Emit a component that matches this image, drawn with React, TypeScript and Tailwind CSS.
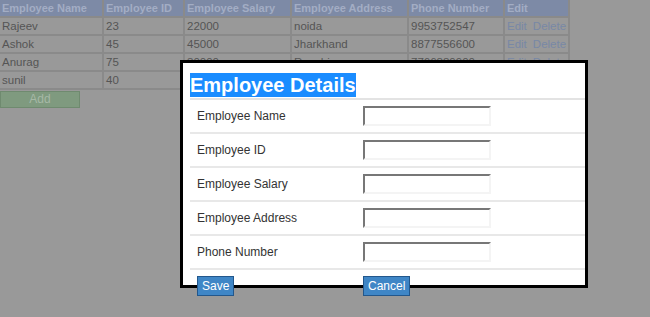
const employees = [
  { name: 'Rajeev', id: '23', salary: '22000', address: 'noida', phone: '9953752547' },
  { name: 'Ashok', id: '45', salary: '45000', address: 'Jharkhand', phone: '8877556600' },
  { name: 'Anurag', id: '75', salary: '30000', address: 'Ranchi', phone: '7766889900' },
  { name: 'sunil', id: '40', salary: '40000', address: 'Delhi', phone: '9988776655' },
]

const fields = ['Employee Name', 'Employee ID', 'Employee Salary', 'Employee Address', 'Phone Number']

const cell = 'h-[16px] p-0 pl-[2px] border-r-2 border-b-2 border-[#8a8a8a] leading-[16px] text-left whitespace-nowrap overflow-hidden'

export default function App() {
  return (
    <div className="relative min-h-screen bg-[#999999] font-['Liberation_Sans',Arial,sans-serif]">
      <table className="table-fixed w-[569px] border-collapse text-[11.5px] text-[#555555]">
        <thead>
          <tr className="bg-[#7d8aa6] text-[#a3adc4] font-bold text-[11px]">
            <th className={`${cell} w-[103px]`}>Employee Name</th>
            <th className={`${cell} w-[81px]`}>Employee ID</th>
            <th className={`${cell} w-[107px]`}>Employee Salary</th>
            <th className={`${cell} w-[117px]`}>Employee Address</th>
            <th className={`${cell} w-[96px]`}>Phone Number</th>
            <th className={`${cell} w-[65px]`}>Edit</th>
          </tr>
        </thead>
        <tbody>
          {employees.map(e => (
            <tr key={e.name}>
              <td className={cell}>{e.name}</td>
              <td className={cell}>{e.id}</td>
              <td className={cell}>{e.salary}</td>
              <td className={cell}>{e.address}</td>
              <td className={cell}>{e.phone}</td>
              <td className={`${cell} text-[#7888a6]`}>
                <span className="mr-[6px]">Edit</span>
                <span>Delete</span>
              </td>
            </tr>
          ))}
        </tbody>
      </table>
      <button className="block mt-[1px] w-[80px] h-[17px] bg-[#7f9a7f] border border-[#6f8a6f] text-[12px] leading-[15px] text-[#a6b8a6]">
        Add
      </button>

      <div className="absolute left-[180px] top-[60px] w-[408px] h-[228px] bg-white border-[3px] border-black pl-[7px] pt-[10px]">
        <div className="border-b-2 border-[#e3e3e3] h-[27px]">
          <span className="bg-[#1a8cff] text-white font-bold text-[20px] leading-[24px] inline-block align-top">Employee Details</span>
        </div>
        {fields.map(f => (
          <div key={f} className="flex items-center h-[34px] border-b-2 border-[#e8e8e8] text-[12px] text-[#333333]">
            <div className="w-[173px] pl-[7px]">{f}</div>
            <input className="w-[128px] h-[20px] border-2 border-t-[#777777] border-l-[#777777] border-r-[#f4f4f4] border-b-[#f4f4f4] bg-white outline-none" />
          </div>
        ))}
        <div className="flex items-start pt-[6px]">
          <div className="w-[173px] pl-[7px] flex">
            <button className="h-[20px] px-[4px] bg-[#3f86c6] border border-[#22578c] text-white text-[12px] leading-[18px]">Save</button>
          </div>
          <button className="h-[20px] px-[4px] bg-[#3f86c6] border border-[#22578c] text-white text-[12px] leading-[18px]">Cancel</button>
        </div>
      </div>
    </div>
  )
}
